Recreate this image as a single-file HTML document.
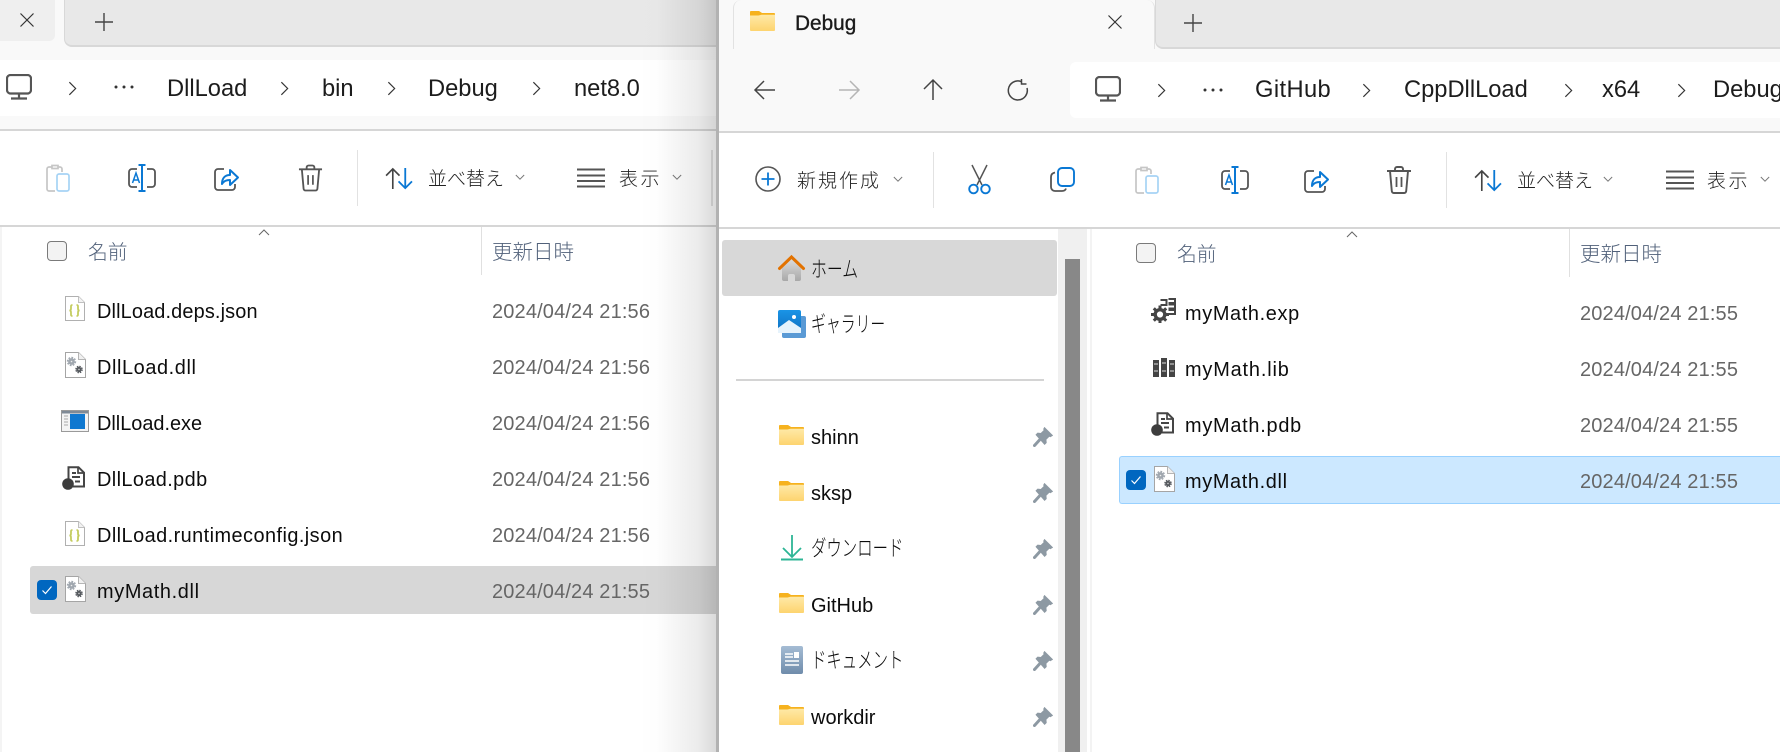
<!DOCTYPE html>
<html lang="ja">
<head>
<meta charset="utf-8">
<title>Explorer</title>
<style>
html,body{margin:0;padding:0}
body{width:1780px;height:752px;overflow:hidden;background:#fff;position:relative;font-family:"Liberation Sans","Noto Sans CJK JP",sans-serif;color:#111}
.a{position:absolute}
.t{position:absolute;white-space:nowrap;line-height:30px;height:30px}
.addr{font-size:23.7px;color:#1c1c1c}
.file{font-size:19.9px;color:#0c0c0c;letter-spacing:.1px}
.date{font-size:20px;color:#666;letter-spacing:.15px}
.hd{font-size:19.8px;color:#51617a;font-weight:300}
.cmd{font-size:19px;color:#222;font-weight:300}
.nav{font-size:20px;color:#0c0c0c}
.navj{font-size:22px;color:#0c0c0c;font-weight:300;transform:scaleX(.7);transform-origin:0 50%}
svg{position:absolute;overflow:visible}
.cb{position:absolute;width:20px;height:20px;box-sizing:border-box;border-radius:4px;background:#f3f3f3;border:1px solid #7a7a7a}
.cbc{position:absolute;width:20px;height:20px;border-radius:4px;background:#0067c0}
</style>
</head>
<body>
<svg width="0" height="0" style="position:absolute">
<defs>
<linearGradient id="fg" x1="0" y1="0" x2="0" y2="1"><stop offset="0" stop-color="#ffeeb5"/><stop offset="1" stop-color="#fdd46f"/></linearGradient>
<linearGradient id="hg" x1="0" y1="0" x2="0" y2="1"><stop offset="0" stop-color="#dcdcdc"/><stop offset="1" stop-color="#a8a8a8"/></linearGradient>
<linearGradient id="gg" x1="0" y1="0" x2="0" y2="1"><stop offset="0" stop-color="#1a94e6"/><stop offset="1" stop-color="#0f6fc0"/></linearGradient>
<linearGradient id="dg" x1="0" y1="0" x2="0" y2="1"><stop offset="0" stop-color="#a5bcd4"/><stop offset="1" stop-color="#6f8cab"/></linearGradient>
<symbol id="folder" viewBox="0 0 25 20"><path d="M1 0h8l3 2h12a1 1 0 0 1 1 1v16a1 1 0 0 1-1 1H1a1 1 0 0 1-1-1V1a1 1 0 0 1 1-1z" fill="url(#fg)"/><path d="M1 0h8l3 2h12a1 1 0 0 1 1 1v.8H11.500L8.500 4.500H0V1a1 1 0 0 1 1-1z" fill="#f6b21e"/></symbol>
<symbol id="pin" viewBox="0 0 20 20"><path d="M11.500 0.500l8 8-2.200 1.300-1-.6-3.300 3.300.3 3.200-1.700 1.700L3 7.800l1.700-1.700 3.200.3L11.200 3.100l-.6-1z" fill="#8d99a3" stroke="#8d99a3" stroke-width=".8"/><path d="M6.500 13L1.500 18.500" stroke="#8d99a3" stroke-width="3" stroke-linecap="round"/></symbol>
<symbol id="dll" viewBox="0 0 21 26"><path d="M.5.500h13l7 7v18H.5z" fill="#fff" stroke="#a5a5a5"/><path d="M13.500.500v7h7" fill="#f0f0f0" stroke="#b5b5b5"/><circle cx="6.500" cy="9.500" r="3.400" fill="#a0a7af"/><circle cx="6.500" cy="9.500" r="4" fill="none" stroke="#a0a7af" stroke-width="1.400" stroke-dasharray="1.800 1.300"/><circle cx="6.500" cy="9.500" r=".8" fill="#eee"/><circle cx="14" cy="17.500" r="2.700" fill="#55595e"/><circle cx="14" cy="17.500" r="3.200" fill="none" stroke="#55595e" stroke-width="1.200" stroke-dasharray="1.500 1"/><circle cx="14" cy="17.500" r=".7" fill="#ddd"/></symbol>
<symbol id="json" viewBox="0 0 20 25"><path d="M.5.500h13l6 6v18H.5z" fill="#fff" stroke="#b0b0b0"/><path d="M13.500.500v6h6" fill="#f2f2f2" stroke="#c0c0c0"/><path d="M7.500 9c-1.800 0-1.500 1-1.500 3s-.2 2.200-1.400 2.500c1.200.3 1.400.5 1.400 2.500s-.3 3 1.500 3M11.500 9c1.800 0 1.500 1 1.500 3s.2 2.200 1.400 2.500c-1.200.3-1.400.5-1.400 2.500s.3 3-1.500 3" fill="none" stroke="#c4cc5e" stroke-width="1.800"/></symbol>
<symbol id="pdb" viewBox="0 0 24 24"><path d="M6.500 15V1.200h10l5.500 5.500V20.500H11" fill="#fff" stroke="#454545" stroke-width="2"/><path d="M16 1v6h6" fill="none" stroke="#454545" stroke-width="1.700"/><path d="M10 7h4M10 11h8M13 15.500h5" stroke="#454545" stroke-width="2"/><circle cx="6" cy="18" r="5.800" fill="#3d3d3d"/></symbol>
<symbol id="mon" viewBox="0 0 26 26"><rect x="1" y="1" width="24" height="18.500" rx="3.500" fill="none" stroke="#555" stroke-width="2.200"/><path d="M13 20v4M5 24.500h16" stroke="#555" stroke-width="2.200"/></symbol>
<symbol id="chev" viewBox="0 0 10 16"><path d="M1.500 1l7 7-7 7" fill="none" stroke="#333" stroke-width="1.300"/></symbol>
<symbol id="down" viewBox="0 0 12 8"><path d="M1 1l5 5 5-5" fill="none" stroke="#777" stroke-width="1.200"/></symbol>
<symbol id="dots" viewBox="0 0 20 4"><circle cx="2" cy="2" r="1.500" fill="#333"/><circle cx="10" cy="2" r="1.500" fill="#333"/><circle cx="18" cy="2" r="1.500" fill="#333"/></symbol>
<symbol id="paste" viewBox="0 0 24 28"><path d="M6 3H3a2 2 0 0 0-2 2v20a2 2 0 0 0 2 2h6" fill="none" stroke="#c6c6c6" stroke-width="1.700"/><path d="M6 1.500h6v3H6zM12 3h2a2 2 0 0 1 2 2v3" fill="none" stroke="#c6c6c6" stroke-width="1.700"/><rect x="11" y="10" width="12" height="17" rx="2" fill="none" stroke="#a6d3f5" stroke-width="1.700"/></symbol>
<symbol id="ren" viewBox="0 0 28 28"><path d="M9 5H4a3 3 0 0 0-3 3v12a3 3 0 0 0 3 3h5M19 5h5a3 3 0 0 1 3 3v12a3 3 0 0 1-3 3h-5" fill="none" stroke="#555" stroke-width="1.800"/><path d="M14 1v26M10.500 1h7M10.500 27h7" fill="none" stroke="#0a78d4" stroke-width="2"/><path d="M4.500 19L8 9l3.500 10M5.700 16h4.600" fill="none" stroke="#0a78d4" stroke-width="1.500"/></symbol>
<symbol id="share" viewBox="0 0 26 26"><path d="M10 4H4a3 3 0 0 0-3 3v15a3 3 0 0 0 3 3h14a3 3 0 0 0 3-3v-3" fill="none" stroke="#555" stroke-width="1.800"/><path d="M8 19c0-6 3-9 8-9V5l8 7.500-8 7.500v-5c-4 0-6 1-8 4z" fill="none" stroke="#0a78d4" stroke-width="2" stroke-linejoin="round"/></symbol>
<symbol id="del" viewBox="0 0 26 28"><path d="M1 5h24M9 5V3a2 2 0 0 1 2-2h4a2 2 0 0 1 2 2v2" fill="none" stroke="#555" stroke-width="1.900"/><path d="M4 5l1.800 20a2 2 0 0 0 2 2h10.400a2 2 0 0 0 2-2L22 5" fill="none" stroke="#555" stroke-width="1.900"/><path d="M10.500 11v10M15.500 11v10" stroke="#555" stroke-width="1.800"/></symbol>
<symbol id="sort" viewBox="0 0 30 24"><path d="M8 23V2M1 9l7-7 7 7" fill="none" stroke="#444" stroke-width="1.700"/><path d="M21 1v21M14 15l7 7 7-7" fill="none" stroke="#0a78d4" stroke-width="1.900"/></symbol>
<symbol id="ham" viewBox="0 0 28 20"><path d="M0 1.500h28M0 7.500h28M0 13h28M0 18.500h28" stroke="#555" stroke-width="1.900"/></symbol>
<symbol id="chk" viewBox="0 0 20 20"><path d="M5.500 10.500l3 3 6-7" fill="none" stroke="#fff" stroke-width="1.200"/></symbol>
<symbol id="caret" viewBox="0 0 12 7"><path d="M1 6l5-5 5 5" fill="none" stroke="#666" stroke-width="1"/></symbol>
</defs>
</svg>

<!-- LEFT WINDOW -->
<div class="a" style="left:0;top:0;width:716px;height:752px;background:#fff;overflow:hidden">
  <div class="a" style="left:0;top:0;width:716px;height:130px;background:#f9f9f9"></div>
  <div class="a" style="left:64px;top:0;width:652px;height:47px;background:#e8e8e8;border-bottom:2px solid #d8d8d8;border-left:1px solid #d8d8d8;border-bottom-left-radius:8px;box-sizing:border-box"></div>
  <div class="a" style="left:0;top:0;width:55px;height:41px;background:#efefef;border-radius:0 0 6px 0"></div>
  <svg style="left:20px;top:13px" width="14" height="14"><path d="M.5.500l13 13M13.500.500l-13 13" stroke="#333" stroke-width="1.200"/></svg>
  <svg style="left:95px;top:13px" width="18" height="18"><path d="M9 0v18M0 9h18" stroke="#444" stroke-width="1.400"/></svg>
  <div class="a" style="left:0;top:60px;width:716px;height:56px;background:#fff"></div>
  <svg style="left:6px;top:74px" width="26" height="26"><use href="#mon"/></svg>
  <svg style="left:68px;top:81px" width="9" height="15"><use href="#chev"/></svg>
  <svg style="left:114px;top:85px" width="20" height="4"><use href="#dots"/></svg>
  <div class="t addr" style="left:167px;top:74px">DllLoad</div>
  <svg style="left:280px;top:81px" width="9" height="15"><use href="#chev"/></svg>
  <div class="t addr" style="left:322px;top:74px">bin</div>
  <svg style="left:387px;top:81px" width="9" height="15"><use href="#chev"/></svg>
  <div class="t addr" style="left:428px;top:74px">Debug</div>
  <svg style="left:532px;top:81px" width="9" height="15"><use href="#chev"/></svg>
  <div class="t addr" style="left:574px;top:74px">net8.0</div>
  <div class="a" style="left:0;top:129px;width:716px;height:2px;background:#d6d6d6"></div>

  <svg style="left:46px;top:164px" width="24" height="28"><use href="#paste"/></svg>
  <svg style="left:128px;top:164px" width="28" height="28"><use href="#ren"/></svg>
  <svg style="left:214px;top:165px" width="26" height="26"><use href="#share"/></svg>
  <svg style="left:298px;top:164px" width="25" height="28"><use href="#del"/></svg>
  <div class="a" style="left:357px;top:150px;width:1px;height:56px;background:#e2e2e2"></div>
  <svg style="left:385px;top:167px" width="29" height="23"><use href="#sort"/></svg>
  <div class="t cmd" style="left:428px;top:165px">並べ替え</div>
  <svg style="left:515px;top:174px" width="10" height="7"><use href="#down"/></svg>
  <svg style="left:577px;top:168px" width="28" height="20"><use href="#ham"/></svg>
  <div class="t cmd" style="left:619px;top:165px;letter-spacing:2.500px">表示</div>
  <svg style="left:672px;top:174px" width="10" height="7"><use href="#down"/></svg>
  <div class="a" style="left:711px;top:150px;width:2px;height:56px;background:#e2e2e2"></div>
  <div class="a" style="left:0;top:225px;width:716px;height:2px;background:#d6d6d6"></div>
  <div class="a" style="left:0;top:227px;width:2px;height:525px;background:#f4f4f4"></div>

  <svg style="left:258px;top:229px" width="12" height="7"><use href="#caret"/></svg>
  <div class="cb" style="left:47px;top:241px"></div>
  <div class="t hd" style="left:88px;top:238px">名前</div>
  <div class="a" style="left:481px;top:227px;width:1px;height:48px;background:#e0e0e0"></div>
  <div class="t hd" style="left:492px;top:238px;font-size:20.5px">更新日時</div>

  <svg style="left:65px;top:296px" width="20" height="25"><use href="#json"/></svg>
  <div class="t file" style="left:97px;top:297px;letter-spacing:.15px">DllLoad.deps.json</div>
  <div class="t date" style="left:492px;top:297px">2024/04/24 21:56</div>
  <svg style="left:65px;top:352px" width="21" height="26"><use href="#dll"/></svg>
  <div class="t file" style="left:97px;top:353px;letter-spacing:.6px">DllLoad.dll</div>
  <div class="t date" style="left:492px;top:353px">2024/04/24 21:56</div>
  <svg style="left:61px;top:410px" width="28" height="22"><rect x=".5" y=".5" width="27" height="21" fill="#f4f4f4" stroke="#9a9a9a"/><rect x="1" y="1" width="26" height="2.500" fill="#7f8a96"/><rect x="9" y="4" width="15" height="15" fill="#0f78d0"/><path d="M3 6h4M3 9h4M3 12h4M3 15h4" stroke="#a9a9a9"/></svg>
  <div class="t file" style="left:97px;top:409px;letter-spacing:0">DllLoad.exe</div>
  <div class="t date" style="left:492px;top:409px">2024/04/24 21:56</div>
  <svg style="left:62px;top:466px" width="24" height="24"><use href="#pdb"/></svg>
  <div class="t file" style="left:97px;top:465px;letter-spacing:.4px">DllLoad.pdb</div>
  <div class="t date" style="left:492px;top:465px">2024/04/24 21:56</div>
  <svg style="left:65px;top:521px" width="20" height="25"><use href="#json"/></svg>
  <div class="t file" style="left:97px;top:521px;letter-spacing:.45px">DllLoad.runtimeconfig.json</div>
  <div class="t date" style="left:492px;top:521px">2024/04/24 21:56</div>
  <div class="a" style="left:30px;top:566px;width:686px;height:48px;background:#d7d7d7;border-radius:3px 0 0 3px"></div>
  <div class="cbc" style="left:37px;top:580px"></div>
  <svg style="left:37px;top:580px" width="20" height="20"><use href="#chk"/></svg>
  <svg style="left:65px;top:576px" width="21" height="26"><use href="#dll"/></svg>
  <div class="t file" style="left:97px;top:577px;letter-spacing:.65px">myMath.dll</div>
  <div class="t date" style="left:492px;top:577px">2024/04/24 21:55</div>
  <div class="a" style="left:630px;top:0;width:86px;height:752px;background:linear-gradient(90deg,rgba(0,0,0,0),rgba(0,0,0,.005) 30%,rgba(0,0,0,.08) 80%,rgba(0,0,0,.15))"></div>
</div>
<div class="a" style="left:716px;top:0;width:3px;height:752px;background:#b2b2b2"></div>

<!-- RIGHT WINDOW -->
<div class="a" style="left:719px;top:0;width:1061px;height:752px;background:#fff;overflow:hidden">
  <div class="a" style="left:0;top:0;width:1061px;height:132px;background:#f9f9f9"></div>
  <div class="a" style="left:436px;top:0;width:625px;height:49px;background:#e8e8e8;border-bottom:2px solid #d8d8d8;box-sizing:border-box;border-left:1px solid #d8d8d8;border-bottom-left-radius:8px"></div>
  <div class="a" style="left:14px;top:0;width:422px;height:49px;border:1px solid #e2e2e2;border-top:0;border-bottom:0;border-radius:8px 8px 0 0;box-sizing:border-box"></div>
  <svg style="left:31px;top:11px" width="25" height="20"><use href="#folder"/></svg>
  <div class="t" style="left:76px;top:9px;font-size:20.8px;color:#1a1a1a;-webkit-text-stroke:.35px #1a1a1a">Debug</div>
  <svg style="left:389px;top:15px" width="14" height="14"><path d="M.5.500l13 13M13.500.500l-13 13" stroke="#333" stroke-width="1.200"/></svg>
  <svg style="left:465px;top:14px" width="18" height="18"><path d="M9 0v18M0 9h18" stroke="#444" stroke-width="1.400"/></svg>

  <svg style="left:35px;top:79px" width="22" height="22"><path d="M21 11H1M10 2L1 11l9 9" fill="none" stroke="#444" stroke-width="1.500"/></svg>
  <svg style="left:119px;top:79px" width="22" height="22"><path d="M1 11h20M12 2l9 9-9 9" fill="none" stroke="#b5b5b5" stroke-width="1.500"/></svg>
  <svg style="left:203px;top:79px" width="22" height="22"><path d="M11 21V1M2 10l9-9 9 9" fill="none" stroke="#444" stroke-width="1.500"/></svg>
  <svg style="left:288px;top:79px" width="22" height="22"><path d="M14 2.500a9.500 9.500 0 1 0 6 6.500M14.500 0v5h5" fill="none" stroke="#444" stroke-width="1.500"/></svg>

  <div class="a" style="left:351px;top:62px;width:710px;height:56px;background:#fff;border-radius:6px 0 0 6px"></div>
  <svg style="left:376px;top:76px" width="26" height="26"><use href="#mon"/></svg>
  <svg style="left:438px;top:83px" width="9" height="15"><use href="#chev"/></svg>
  <svg style="left:484px;top:88px" width="20" height="4"><use href="#dots"/></svg>
  <div class="t addr" style="left:536px;top:75px;letter-spacing:.4px">GitHub</div>
  <svg style="left:643px;top:83px" width="9" height="15"><use href="#chev"/></svg>
  <div class="t addr" style="left:685px;top:75px">CppDllLoad</div>
  <svg style="left:845px;top:83px" width="9" height="15"><use href="#chev"/></svg>
  <div class="t addr" style="left:883px;top:75px">x64</div>
  <svg style="left:958px;top:83px" width="9" height="15"><use href="#chev"/></svg>
  <div class="t addr" style="left:994px;top:75px">Debug</div>
  <div class="a" style="left:0;top:131px;width:1061px;height:2px;background:#d6d6d6"></div>

  <svg style="left:36px;top:166px" width="26" height="26"><circle cx="13" cy="13" r="12" fill="none" stroke="#555" stroke-width="1.600"/><path d="M13 6.500v13M6.500 13h13" stroke="#0a78d4" stroke-width="1.800"/></svg>
  <div class="t cmd" style="left:78px;top:167px;letter-spacing:2px">新規作成</div>
  <svg style="left:174px;top:176px" width="10" height="7"><use href="#down"/></svg>
  <div class="a" style="left:214px;top:152px;width:1px;height:56px;background:#e2e2e2"></div>
  <svg style="left:248px;top:165px" width="25" height="29"><path d="M5 0l10 20M20 0L10 20" stroke="#555" stroke-width="1.500" fill="none"/><circle cx="6.500" cy="24" r="4.300" fill="none" stroke="#0a78d4" stroke-width="1.900"/><circle cx="18.500" cy="24" r="4.300" fill="none" stroke="#0a78d4" stroke-width="1.900"/></svg>
  <svg style="left:331px;top:167px" width="25" height="26"><rect x="8" y="1" width="16" height="18" rx="4" fill="none" stroke="#0a78d4" stroke-width="1.900"/><path d="M5 5.500C2.500 6 1 7.500 1 10v10a4 4 0 0 0 4 4h7c2 0 3.500-1 4-2.500" fill="none" stroke="#555" stroke-width="1.800"/></svg>
  <svg style="left:416px;top:166px" width="24" height="28"><use href="#paste"/></svg>
  <svg style="left:502px;top:166px" width="28" height="28"><use href="#ren"/></svg>
  <svg style="left:585px;top:167px" width="26" height="26"><use href="#share"/></svg>
  <svg style="left:667px;top:166px" width="26" height="28"><use href="#del"/></svg>
  <div class="a" style="left:727px;top:152px;width:1px;height:56px;background:#e2e2e2"></div>
  <svg style="left:755px;top:169px" width="29" height="23"><use href="#sort"/></svg>
  <div class="t cmd" style="left:798px;top:167px">並べ替え</div>
  <svg style="left:884px;top:176px" width="10" height="7"><use href="#down"/></svg>
  <svg style="left:947px;top:170px" width="28" height="20"><use href="#ham"/></svg>
  <div class="t cmd" style="left:988px;top:167px;letter-spacing:2.500px">表示</div>
  <svg style="left:1041px;top:176px" width="10" height="7"><use href="#down"/></svg>
  <div class="a" style="left:0;top:227px;width:1061px;height:2px;background:#d6d6d6"></div>

  <!-- nav -->
  <div class="a" style="left:3px;top:240px;width:335px;height:56px;background:#d8d8d8;border-radius:3px"></div>
  <svg style="left:59px;top:255px" width="27" height="26"><path d="M4 13L13.500 4 23 13v11a2 2 0 0 1-2 2h-4v-5a2 2 0 0 0-2-2h-3a2 2 0 0 0-2 2v5H6a2 2 0 0 1-2-2z" fill="url(#hg)"/><path d="M1.500 13.500L13.500 2l12 11.500" fill="none" stroke="#e27200" stroke-width="3" stroke-linecap="round"/></svg>
  <div class="t navj" style="left:92px;top:255px;transform:scaleX(.72)">ホーム</div>
  <svg style="left:59px;top:310px" width="28" height="28"><rect x="4" y="6" width="24" height="22" rx="2" fill="#5a9ad5"/><rect x="0" y="0" width="23" height="23" rx="2" fill="url(#gg)"/><path d="M0 23V18l11-8 12 8v5z" fill="#e6f3fc"/><circle cx="16" cy="7" r="2" fill="#fff"/></svg>
  <div class="t navj" style="left:92px;top:310px;transform:scaleX(.675)">ギャラリー</div>
  <div class="a" style="left:17px;top:379px;width:308px;height:2px;background:#d4d4d4"></div>

  <svg style="left:60px;top:425px" width="25" height="20"><use href="#folder"/></svg>
  <div class="t nav" style="left:92px;top:423px">shinn</div>
  <svg style="left:314px;top:427px" width="20" height="20"><use href="#pin"/></svg>
  <svg style="left:60px;top:481px" width="25" height="20"><use href="#folder"/></svg>
  <div class="t nav" style="left:92px;top:479px">sksp</div>
  <svg style="left:314px;top:483px" width="20" height="20"><use href="#pin"/></svg>
  <svg style="left:61px;top:535px" width="24" height="26"><path d="M12 0v22M3 13l9 9 9-9" fill="none" stroke="#2db595" stroke-width="1.800"/><path d="M1 24.500h22" stroke="#2db595" stroke-width="2"/></svg>
  <div class="t navj" style="left:92px;top:534px">ダウンロード</div>
  <svg style="left:314px;top:539px" width="20" height="20"><use href="#pin"/></svg>
  <svg style="left:60px;top:593px" width="25" height="20"><use href="#folder"/></svg>
  <div class="t nav" style="left:92px;top:591px">GitHub</div>
  <svg style="left:314px;top:595px" width="20" height="20"><use href="#pin"/></svg>
  <svg style="left:62px;top:646px" width="22" height="28"><rect width="22" height="28" rx="2" fill="url(#dg)"/><path d="M4 8h8M4 11h8M4 15h14M4 19h14" stroke="#fff" stroke-width="1.600"/><rect x="13" y="6" width="5" height="6" fill="#fff"/></svg>
  <div class="t navj" style="left:92px;top:646px">ドキュメント</div>
  <svg style="left:314px;top:651px" width="20" height="20"><use href="#pin"/></svg>
  <svg style="left:60px;top:705px" width="25" height="20"><use href="#folder"/></svg>
  <div class="t nav" style="left:92px;top:703px">workdir</div>
  <svg style="left:314px;top:707px" width="20" height="20"><use href="#pin"/></svg>

  <div class="a" style="left:339px;top:229px;width:29px;height:523px;background:#f0f0f0"></div>
  <div class="a" style="left:346px;top:259px;width:15px;height:493px;background:#888"></div>
  <div class="a" style="left:371px;top:229px;width:2px;height:523px;background:#f3f3f3"></div>

  <!-- list -->
  <svg style="left:627px;top:231px" width="12" height="7"><use href="#caret"/></svg>
  <div class="cb" style="left:417px;top:243px"></div>
  <div class="t hd" style="left:458px;top:240px">名前</div>
  <div class="a" style="left:850px;top:229px;width:1px;height:48px;background:#e0e0e0"></div>
  <div class="t hd" style="left:861px;top:240px;font-size:20.5px">更新日時</div>

  <svg style="left:432px;top:298px" width="26" height="26"><g fill="none" stroke="#454545"><circle cx="9" cy="16.500" r="4.800" stroke-width="3.400"/><path d="M9 7.500v3.500M9 22v3M0 16.500h3.500M14.500 16.500h3.500M2.800 10.300l2.400 2.400M12.800 20.300l2.400 2.400M15.200 10.300L12.800 12.700M2.800 22.700L5.200 20.300" stroke-width="3"/><path d="M9.500 2h6v5h-6M17.500 1h6.500v4h-6.500M17.500 6.500h6.500v4h-6.500M17.500 12h6.500v4h-6.500" stroke-width="2"/></g></svg>
  <div class="t file" style="left:466px;top:299px;letter-spacing:.65px">myMath.exp</div>
  <div class="t date" style="left:861px;top:299px">2024/04/24 21:55</div>
  <svg style="left:434px;top:358px" width="22" height="20"><path d="M0 2h6v17H0zM8 0h6v19H8zM16 2h6v17h-6z" fill="#444"/><path d="M1 6h4M1 13h4M9 5h4M9 13h4M17 6h4M17 13h4" stroke="#ddd" stroke-width="1"/></svg>
  <div class="t file" style="left:466px;top:355px;letter-spacing:.85px">myMath.lib</div>
  <div class="t date" style="left:861px;top:355px">2024/04/24 21:55</div>
  <svg style="left:432px;top:412px" width="24" height="24"><use href="#pdb"/></svg>
  <div class="t file" style="left:466px;top:411px;letter-spacing:.75px">myMath.pdb</div>
  <div class="t date" style="left:861px;top:411px">2024/04/24 21:55</div>
  <div class="a" style="left:400px;top:456px;width:661px;height:47.500px;background:#cce8ff;border:1px solid #99d1ff;border-right:0;box-sizing:border-box;border-radius:3px 0 0 3px"></div>
  <div class="cbc" style="left:407px;top:470px"></div>
  <svg style="left:407px;top:470px" width="20" height="20"><use href="#chk"/></svg>
  <svg style="left:435px;top:466px" width="21" height="26"><use href="#dll"/></svg>
  <div class="t file" style="left:466px;top:467px;letter-spacing:.65px">myMath.dll</div>
  <div class="t date" style="left:861px;top:467px">2024/04/24 21:55</div>
</div>
</body>
</html>
